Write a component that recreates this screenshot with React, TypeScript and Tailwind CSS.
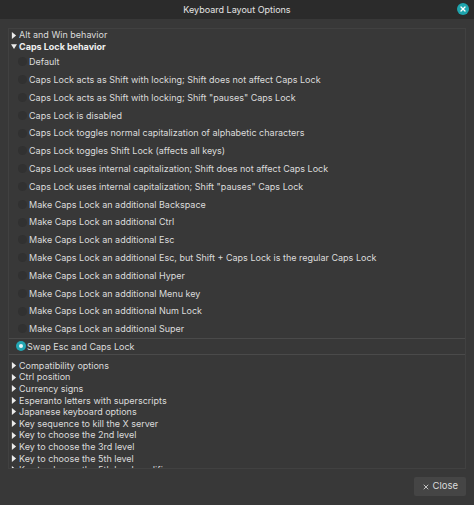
import { X } from 'lucide-react';

const capsOptions = [
  'Default',
  'Caps Lock acts as Shift with locking; Shift does not affect Caps Lock',
  'Caps Lock acts as Shift with locking; Shift "pauses" Caps Lock',
  'Caps Lock is disabled',
  'Caps Lock toggles normal capitalization of alphabetic characters',
  'Caps Lock toggles Shift Lock (affects all keys)',
  'Caps Lock uses internal capitalization; Shift does not affect Caps Lock',
  'Caps Lock uses internal capitalization; Shift "pauses" Caps Lock',
  'Make Caps Lock an additional Backspace',
  'Make Caps Lock an additional Ctrl',
  'Make Caps Lock an additional Esc',
  'Make Caps Lock an additional Esc, but Shift + Caps Lock is the regular Caps Lock',
  'Make Caps Lock an additional Hyper',
  'Make Caps Lock an additional Menu key',
  'Make Caps Lock an additional Num Lock',
  'Make Caps Lock an additional Super',
];

const groups = [
  'Compatibility options',
  'Ctrl position',
  'Currency signs',
  'Esperanto letters with superscripts',
  'Japanese keyboard options',
  'Key sequence to kill the X server',
  'Key to choose the 2nd level',
  'Key to choose the 3rd level',
  'Key to choose the 5th level',
  'Key to choose the 5th level modifier',
];

function Arrow({ open }: { open?: boolean }) {
  return (
    <svg width="6" height="7" viewBox="0 0 7 8" className="shrink-0">
      {open ? <path d="M0 1.5h7L3.5 7z" fill="#ececec" /> : <path d="M1 0v8L6 4z" fill="#ececec" />}
    </svg>
  );
}

export default function App() {
  return (
    <div
      className="flex h-[505px] w-[474px] flex-col overflow-hidden bg-[#383838] text-[9px] text-[#dcdcdc]"
      style={{ fontFamily: 'Inter, "Noto Sans", sans-serif' }}
    >
      <div className="relative flex h-[19px] shrink-0 items-center justify-center bg-[#2b2b2b]">
        <span className="text-[9px] text-[#e4e4e4]">Keyboard Layout Options</span>
        <div className="absolute right-[5px] top-[3px] flex h-[12px] w-[12px] items-center justify-center rounded-full bg-[#1ea4ad]">
          <X size={8} strokeWidth={4} color="#ffffff" />
        </div>
      </div>

      <div className="mx-[8px] mt-[9px] h-[441px] shrink-0 overflow-hidden border border-[#414141] bg-[#383838]">
        <div className="pl-[2px]">
          <div className="flex h-[12px] items-center gap-[2px]">
            <Arrow />
            <span>Alt and Win behavior</span>
          </div>
          <div className="flex h-[11px] items-center gap-[2px]">
            <Arrow open />
            <span className="font-bold text-[#f0f0f0]">Caps Lock behavior</span>
          </div>
          <div className="mt-[1px] flex flex-col">
            {capsOptions.map((o) => (
              <div key={o} className="flex h-[17.8px] items-center gap-[2px] pl-[7px]">
                <span className="h-[9px] w-[9px] shrink-0 rounded-full bg-[#313131]" />
                <span>{o}</span>
              </div>
            ))}
            <div className="-ml-[2px] flex h-[17px] items-center gap-[1px] border-y border-[#4a4a4a] pl-[7px]">
              <span className="flex h-[10px] w-[10px] shrink-0 items-center justify-center rounded-full bg-[#23a6b3]">
                <span className="h-[4px] w-[4px] rounded-full bg-[#e8f6f8]" />
              </span>
              <span>Swap Esc and Caps Lock</span>
            </div>
          </div>
          <div className="mt-[5px] flex flex-col">
            {groups.map((g) => (
              <div key={g} className="flex h-[11.6px] items-center gap-[2px]">
                <Arrow />
                <span>{g}</span>
              </div>
            ))}
          </div>
        </div>
      </div>

      <div className="flex flex-1 items-start justify-end pr-[8px] pt-[8px]">
        <button className="flex h-[19px] items-center gap-[3px] rounded-[2px] bg-[#454545] px-[8px] text-[9.5px] text-[#dcdcdc]">
          <X size={8} strokeWidth={2.5} />
          Close
        </button>
      </div>
    </div>
  );
}
